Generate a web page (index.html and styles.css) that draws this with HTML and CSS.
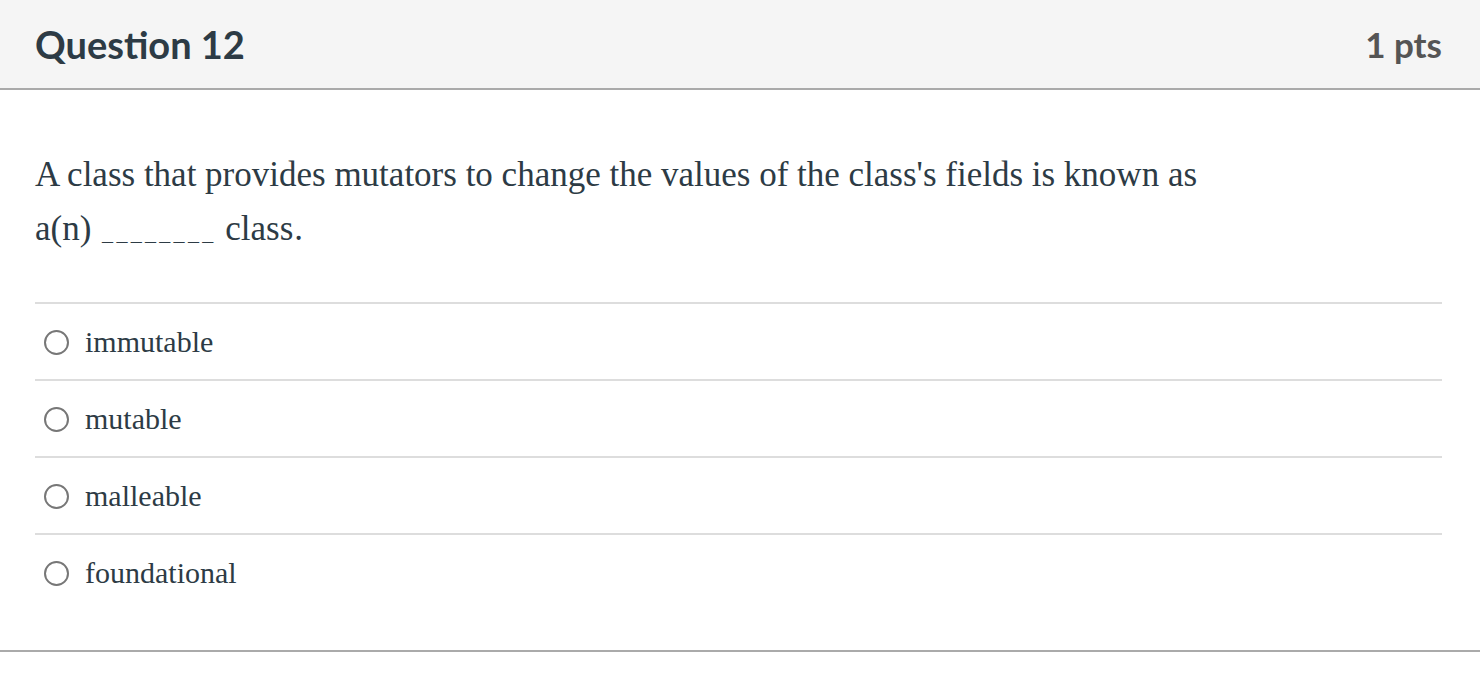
FILE: index.html
```html
<!DOCTYPE html>
<html>
<head>
<meta charset="utf-8">
<link rel="stylesheet" href="styles.css">
</head>
<body>
<div class="question">
  <div class="q-header">
    <h2 class="q-title">Question 12</h2>
    <div class="q-points">1 pts</div>
  </div>
  <div class="q-body">
    <p class="q-text">A class that provides mutators to change the values of the class's fields is known as<br>a(n) <span class="blank">________</span> class<span class="dot">.</span></p>
    <div class="answers">
      <label class="answer"><span class="radio"></span><span class="answer-text">immutable</span></label>
      <label class="answer"><span class="radio"></span><span class="answer-text">mutable</span></label>
      <label class="answer"><span class="radio"></span><span class="answer-text">malleable</span></label>
      <label class="answer"><span class="radio"></span><span class="answer-text">foundational</span></label>
    </div>
  </div>
</div>
</body>
</html>
```

FILE: styles.css
```css
html, body {
  margin: 0;
  padding: 0;
  background: #ffffff;
}

.question {
  width: 1480px;
  border-bottom: 2px solid #aaaaaa;
}

.q-header {
  height: 88px;
  background: #f5f5f5;
  border-bottom: 2px solid #aaaaaa;
  display: flex;
  align-items: center;
  justify-content: space-between;
  padding: 0 38px 0 35px;
  font-family: Lato, "Open Sans", sans-serif;
  font-weight: 700;
}

.q-title {
  margin: 0;
  font-size: 38px;
  font-weight: 700;
  color: #2d3b45;
  line-height: 1;
}

.q-points {
  font-size: 35px;
  color: #555555;
  line-height: 1;
}

.q-body {
  padding: 0 38px 0 35px;
}

.q-text {
  margin: 0;
  padding: 58px 0 42px;
  font-family: "Liberation Serif", "Times New Roman", serif;
  font-size: 35px;
  line-height: 54px;
  color: #2d3b45;
}

.blank {
  font-size: 22px;
  letter-spacing: 3.3px;
  margin-left: 2px;
}

.dot {
  margin-left: 1px;
}

.answers {
  padding-bottom: 40px;
}

.answer {
  display: flex;
  align-items: center;
  height: 75px;
  border-top: 2px solid #dddddd;
  font-family: "Liberation Serif", "Times New Roman", serif;
  font-size: 30px;
  color: #2d3b45;
}

.radio {
  width: 21px;
  height: 21px;
  border: 2px solid #777777;
  border-radius: 50%;
  margin: 2px 16px 0 9px;
  flex: none;
}
```
